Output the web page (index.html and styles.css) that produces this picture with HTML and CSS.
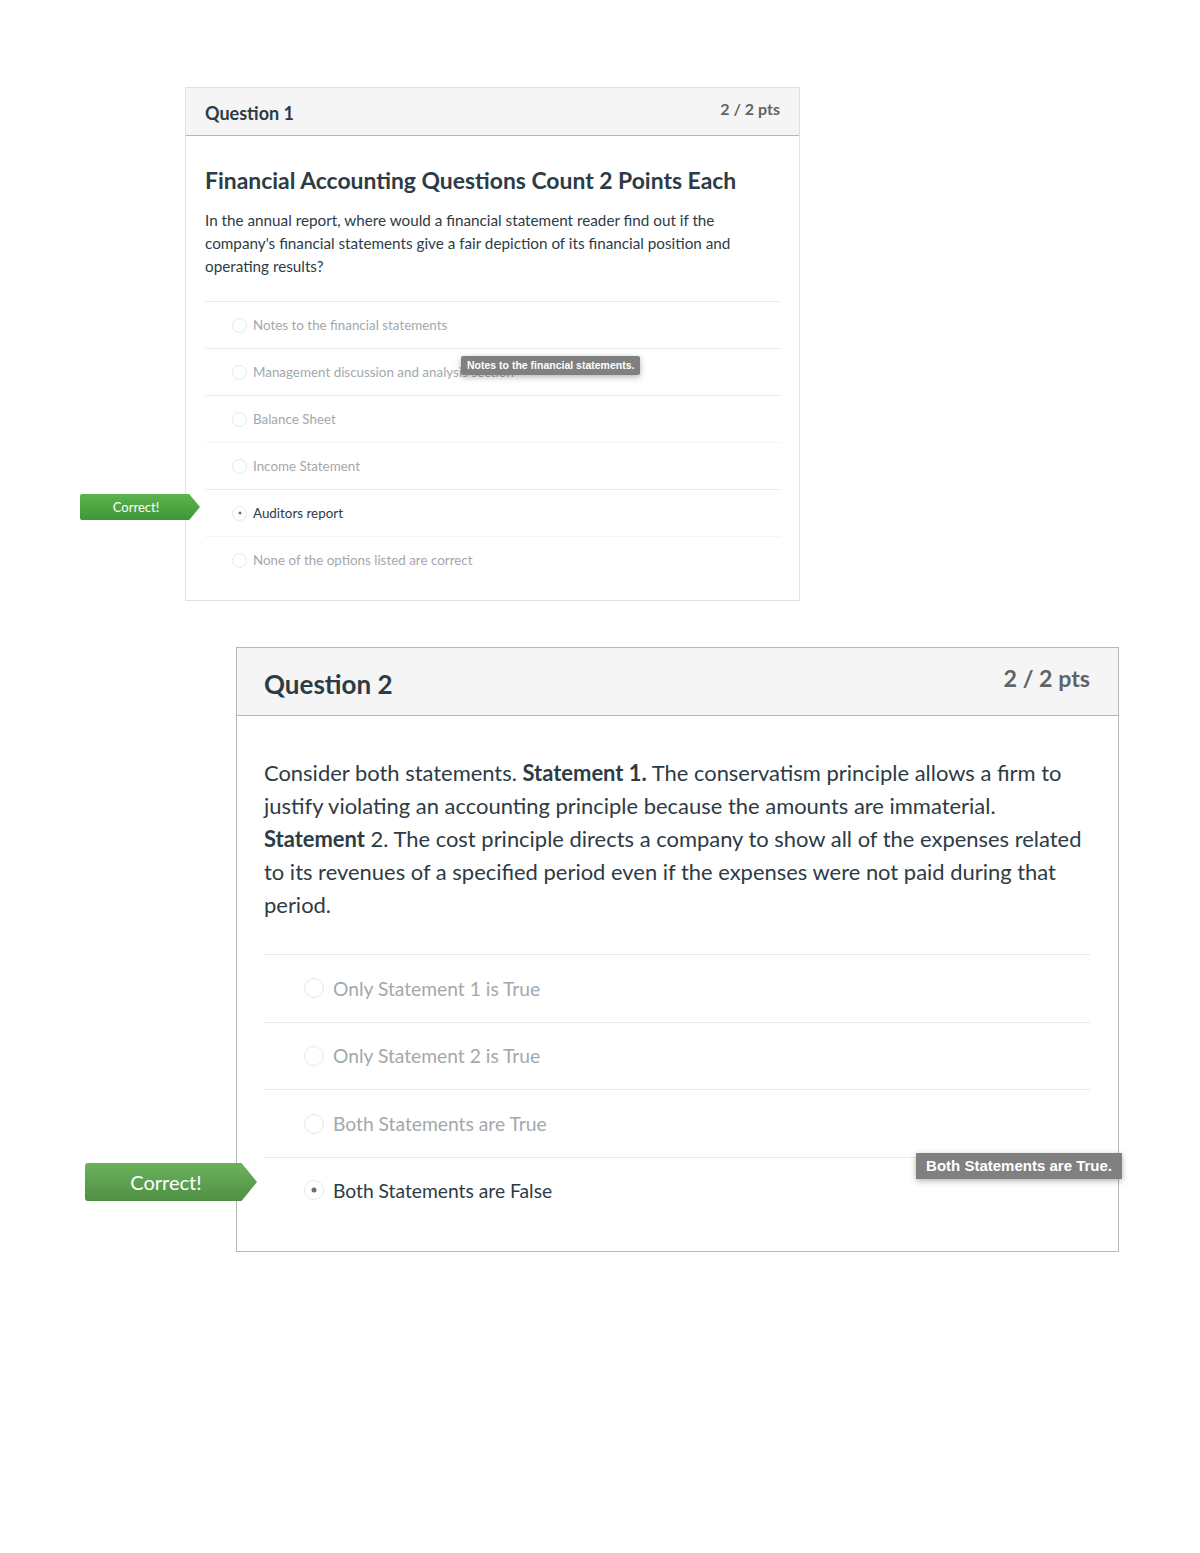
FILE: index.html
```html
<!DOCTYPE html>
<html lang="en">
<head>
    <meta charset="UTF-8">
    <title>Quiz Results</title>
    <link rel="stylesheet" href="styles.css">
</head>
<body>
    <div class="page">
        <div class="question question-small">
            <div class="question-header">
                <span class="question-name">Question 1</span>
                <span class="question-pts">2 / 2 pts</span>
            </div>
            <div class="question-body">
                <h2>Financial Accounting Questions Count 2 Points Each</h2>
                <p>In the annual report, where would a financial statement reader find out if the company's financial statements give a fair depiction of its financial position and operating results?</p>
                <div class="answers">
                    <div class="answer"><span class="radio"></span>Notes to the financial statements</div>
                    <div class="answer">
                        <span class="radio"></span>Management discussion and analysis section
                        <div class="tooltip">Notes to the financial statements.</div>
                    </div>
                    <div class="answer"><span class="radio"></span>Balance Sheet</div>
                    <div class="answer no-line"><span class="radio"></span>Income Statement</div>
                    <div class="answer selected">
                        <div class="correct-flag">Correct!</div>
                        <span class="radio"></span>Auditors report
                    </div>
                    <div class="answer no-line"><span class="radio"></span>None of the options listed are correct</div>
                </div>
            </div>
        </div>

        <div class="question question-large">
            <div class="question-header">
                <span class="question-name">Question 2</span>
                <span class="question-pts">2 / 2 pts</span>
            </div>
            <div class="question-body">
                <p>Consider both statements. <b>Statement 1.</b> The conservatism principle allows a firm to justify violating an accounting principle because the amounts are immaterial. <b>Statement</b> 2. The cost principle directs a company to show all of the expenses related to its revenues of a specified period even if the expenses were not paid during that period.</p>
                <div class="answers">
                    <div class="answer"><span class="radio"></span>Only Statement 1 is True</div>
                    <div class="answer"><span class="radio"></span>Only Statement 2 is True</div>
                    <div class="answer"><span class="radio"></span>Both Statements are True</div>
                    <div class="answer selected">
                        <div class="correct-flag">Correct!</div>
                        <span class="radio"></span>Both Statements are False
                        <div class="tooltip">Both Statements are True.</div>
                    </div>
                </div>
            </div>
        </div>
    </div>
</body>
</html>
```

FILE: styles.css
```css
* {
    margin: 0;
    padding: 0;
    box-sizing: border-box;
}

body {
    background: #fff;
    color: #2d3b45;
    font-family: Lato, 'Open Sans', sans-serif;
}

.page {
    height: 1553px;
    padding-top: 87px;
    overflow: hidden;
}

.question {
    border: 1px solid #c7cdd1;
}

.question-header {
    display: flex;
    justify-content: space-between;
    background: #f5f5f5;
    border-bottom: 1px solid #b5b8ba;
}

.question-name {
    font-weight: 700;
}

.question-pts {
    font-weight: 700;
    color: #5f6468;
}

.question-body h2 {
    font-weight: 700;
}

.answer {
    position: relative;
    display: flex;
    align-items: center;
    border-top: 1px solid #e8eaec;
    color: #a3a8ab;
}

.answer.no-line {
    border-top-color: #f4f5f5;
}

.answer.selected {
    color: #2d3b45;
}

.radio {
    flex: none;
    position: relative;
    border: 1px solid #e6e8e9;
    border-radius: 50%;
}

.selected .radio::after {
    content: '';
    position: absolute;
    top: 50%;
    left: 50%;
    border-radius: 50%;
    background: #6b7074;
    transform: translate(-50%, -50%);
}

.correct-flag {
    position: absolute;
    color: #fff;
    text-align: center;
    clip-path: polygon(0 0, 91% 0, 100% 50%, 91% 100%, 0 100%);
}

.tooltip {
    position: absolute;
    font-family: 'Liberation Sans', Arial, sans-serif;
    font-weight: 700;
    color: #fff;
    white-space: nowrap;
    background: #808080;
    box-shadow: 0 2px 6px rgba(0, 0, 0, 0.3);
}

/* first card, smaller scale */
.question-small {
    width: 615px;
    height: 514px;
    margin-left: 185px;
    border-color: #dfe1e3;
}

.question-small .question-header {
    height: 48px;
    padding: 14px 19px 0;
}

.question-small .question-name {
    font-size: 18px;
}

.question-small .question-pts {
    font-size: 16px;
    margin-top: -3px;
}

.question-small .question-body {
    padding: 29px 19px 0;
}

.question-small h2 {
    font-size: 22.9px;
    line-height: 30px;
    margin-bottom: 14px;
}

.question-small p {
    max-width: 540px;
    font-size: 15.25px;
    line-height: 23px;
    margin-bottom: 23px;
}

.question-small .answer {
    height: 47px;
    padding-left: 27px;
    font-size: 13.4px;
}

.question-small .radio {
    width: 15px;
    height: 15px;
    margin-right: 6px;
}

.question-small .selected .radio::after {
    width: 3px;
    height: 3px;
}

.question-small .correct-flag {
    top: 4px;
    left: -125px;
    width: 120px;
    height: 26px;
    font-size: 13px;
    line-height: 26px;
    padding-right: 8px;
    border-radius: 2px;
    background: linear-gradient(#5cb44c, #3e963a);
}

.question-small .tooltip {
    top: 7px;
    left: 256px;
    padding: 3px 6px;
    font-size: 10.5px;
    line-height: 13px;
    border-radius: 2px;
}

/* second card, larger scale */
.question-large {
    width: 883px;
    height: 605px;
    margin: 46px 0 0 236px;
    border-color: #b5b8ba;
}

.question-large .question-header {
    height: 68px;
    padding: 20px 28px 0 27px;
}

.question-large .question-name {
    font-size: 26px;
}

.question-large .question-pts {
    font-size: 23.2px;
    margin-top: -4px;
}

.question-large .question-body {
    padding: 40px 28px 0 27px;
}

.question-large p {
    font-size: 21.95px;
    line-height: 33px;
    margin-bottom: 33px;
}

.question-large .answer {
    height: 67.67px;
    padding-left: 40px;
    font-size: 19.25px;
}

.question-large .answer.selected {
    padding-bottom: 2px;
}

.question-large .radio {
    width: 20px;
    height: 20px;
    margin-right: 9px;
}

.question-large .selected .radio::after {
    width: 5px;
    height: 5px;
}

.question-large .correct-flag {
    top: 5px;
    left: -179px;
    width: 172px;
    height: 38px;
    font-size: 20px;
    line-height: 38px;
    padding-right: 10px;
    border-radius: 3px;
    background: linear-gradient(#6cb35c, #4e8f45);
}

.question-large .tooltip {
    top: -5px;
    right: -32px;
    padding: 3px 10px;
    font-size: 15px;
    line-height: 20px;
}
```
